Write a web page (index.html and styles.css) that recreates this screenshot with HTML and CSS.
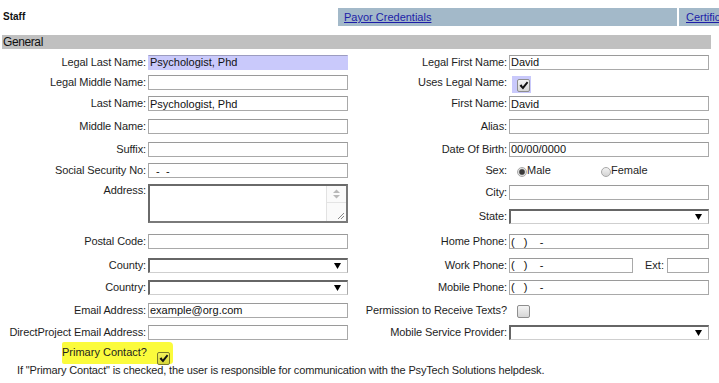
FILE: index.html
```html
<!DOCTYPE html>
<html>
<head>
<meta charset="utf-8">
<link rel="stylesheet" href="styles.css">
</head>
<body>
<div class="topbar">
  <div class="title">Staff</div>
  <div class="tab tab-main"><a href="#">Payor Credentials</a></div>
  <div class="tab tab-next"><a href="#">Certifications</a></div>
</div>
<div class="section">General</div>
<div class="form">
  <label class="lbl c1 r1">Legal Last Name:</label>
  <div class="fld c2 r1"><input class="txt hl" value="Psychologist, Phd"></div>
  <label class="lbl c3 r1">Legal First Name:</label>
  <div class="fld c4 r1"><input class="txt" value="David"></div>

  <label class="lbl c1 r2">Legal Middle Name:</label>
  <div class="fld c2 r2"><input class="txt" value=""></div>
  <label class="lbl c3 r2">Uses Legal Name:</label>
  <div class="fld c4 r2"><span class="cbhl"><input type="checkbox" class="cb" checked></span></div>

  <label class="lbl c1 r3">Last Name:</label>
  <div class="fld c2 r3"><input class="txt" value="Psychologist, Phd"></div>
  <label class="lbl c3 r3">First Name:</label>
  <div class="fld c4 r3"><input class="txt" value="David"></div>

  <label class="lbl c1 r4">Middle Name:</label>
  <div class="fld c2 r4"><input class="txt" value=""></div>
  <label class="lbl c3 r4">Alias:</label>
  <div class="fld c4 r4"><input class="txt" value=""></div>

  <label class="lbl c1 r5">Suffix:</label>
  <div class="fld c2 r5"><input class="txt" value=""></div>
  <label class="lbl c3 r5">Date Of Birth:</label>
  <div class="fld c4 r5"><input class="txt" value="00/00/0000"></div>

  <label class="lbl c1 r6">Social Security No:</label>
  <div class="fld c2 r6"><input class="txt" value="  -  -"></div>
  <label class="lbl c3 r6">Sex:</label>
  <div class="fld c4 r6 sex">
    <span class="opt opt-male"><input type="radio" name="sex" class="rd" checked>Male</span>
    <span class="opt"><input type="radio" name="sex" class="rd">Female</span>
  </div>

  <label class="lbl c1 r7 top">Address:</label>
  <div class="fld c2 addr">
    <div class="ta">
      <textarea></textarea>
      <div class="sb">
        <div class="sb-arrows">
          <svg width="9" height="12" viewBox="0 0 9 12"><path d="M1 5 L4.5 1.5 L8 5 Z" fill="#b8b8b8"/><path d="M1 7 L4.5 10.5 L8 7 Z" fill="#b8b8b8"/></svg>
        </div>
        <div class="sb-grip">
          <svg width="8" height="8" viewBox="0 0 8 8"><path d="M7 1 L1 7 M7 4 L4 7" stroke="#888" stroke-width="1"/></svg>
        </div>
      </div>
    </div>
  </div>
  <label class="lbl c3 r7">City:</label>
  <div class="fld c4 r7"><input class="txt" value=""></div>
  <label class="lbl c3 r8">State:</label>
  <div class="fld c4 r8"><select class="sel"><option></option></select></div>

  <label class="lbl c1 r9">Postal Code:</label>
  <div class="fld c2 r9"><input class="txt" value=""></div>
  <label class="lbl c3 r9">Home Phone:</label>
  <div class="fld c4 r9"><input class="txt" value="(   )    -"></div>

  <label class="lbl c1 r10">County:</label>
  <div class="fld c2 r10"><select class="sel"><option></option></select></div>
  <label class="lbl c3 r10">Work Phone:</label>
  <div class="fld c4 r10 work"><input class="txt phone" value="(   )    -"><span class="ext">Ext:</span><input class="txt extin" value=""></div>

  <label class="lbl c1 r11">Country:</label>
  <div class="fld c2 r11"><select class="sel"><option></option></select></div>
  <label class="lbl c3 r11">Mobile Phone:</label>
  <div class="fld c4 r11"><input class="txt" value="(   )    -"></div>

  <label class="lbl c1 r12">Email Address:</label>
  <div class="fld c2 r12"><input class="txt" value="example@org.com"></div>
  <label class="lbl c3 r12">Permission to Receive Texts?</label>
  <div class="fld c4 r12"><input type="checkbox" class="cb cb-solo"></div>

  <label class="lbl c1 r13">DirectProject Email Address:</label>
  <div class="fld c2 r13"><input class="txt" value=""></div>
  <label class="lbl c3 r13">Mobile Service Provider:</label>
  <div class="fld c4 r13"><select class="sel"><option></option></select></div>

  <div class="primary r14">
    <span class="marker"><span class="plabel">Primary Contact?</span><input type="checkbox" class="cb cb-yellow" checked></span>
  </div>
</div>
<p class="note">If "Primary Contact" is checked, the user is responsible for communication with the PsyTech Solutions helpdesk.</p>
</body>
</html>
```

FILE: styles.css
```css
html, body {
  margin: 0;
  padding: 0;
  background: #ffffff;
}
body {
  width: 719px;
  height: 383px;
  overflow: hidden;
  font-family: "Liberation Sans", Arial, sans-serif;
  font-size: 11px;
  color: #1e1e1e;
}
.topbar {
  display: flex;
  align-items: center;
  padding-top: 8px;
  height: 18px;
  margin-bottom: 9px;
}
.title {
  width: 335px;
  padding-left: 3px;
  font-weight: bold;
  font-size: 10px;
  color: #111;
  margin-top: -2px;
}
.tab {
  height: 18px;
  background: #a3b9c9;
  display: flex;
  align-items: center;
  white-space: nowrap;
  overflow: hidden;
}
.tab a {
  color: #1d1da8;
  text-decoration: underline;
  font-size: 11px;
}
.tab-main {
  width: 333px;
  padding-left: 6px;
  margin-right: 2px;
}
.tab-next {
  flex: 1;
  padding-left: 7px;
}
.section {
  margin-left: 2px;
  width: 709px;
  height: 14px;
  line-height: 14px;
  background: #c0c0c0;
  font-size: 12px;
  letter-spacing: -0.4px;
  padding-left: 1px;
  box-sizing: border-box;
  color: #111;
}
.form {
  margin-top: 3px;
  display: grid;
  grid-template-columns: 146px 200px 157px 200px;
  column-gap: 2px;
  grid-template-rows: 20px 21px 21px 24px 22px 21px 22px 26px 25px 22px 22px 24px 20px 22px;
}
.c1 { grid-column: 1; }
.c2 { grid-column: 2; }
.c3 { grid-column: 3; }
.c4 { grid-column: 4; }
.r1 { grid-row: 1; }
.r2 { grid-row: 2; }
.r3 { grid-row: 3; }
.r4 { grid-row: 4; }
.r5 { grid-row: 5; }
.r6 { grid-row: 6; }
.r7 { grid-row: 7; }
.r8 { grid-row: 8; }
.r9 { grid-row: 9; }
.r10 { grid-row: 10; }
.r11 { grid-row: 11; }
.r12 { grid-row: 12; }
.r13 { grid-row: 13; }
.r14 { grid-row: 14; }
.lbl {
  text-align: right;
  align-self: center;
  white-space: nowrap;
  line-height: 13px;
  letter-spacing: -0.1px;
}
.lbl.top {
  align-self: start;
  margin-top: 3px;
}
.fld {
  display: flex;
  align-items: center;
}
.txt {
  box-sizing: border-box;
  width: 200px;
  height: 15px;
  margin: 0;
  padding: 0 1px;
  border: 1px solid #a9a9a9;
  border-top-color: #9a9a9a;
  font-family: "Liberation Sans", Arial, sans-serif;
  font-size: 11px;
  color: #111;
  background: #fff;
  white-space: pre;
  outline: none;
}
.txt.hl {
  background: #c9c9fb;
  border-color: #c9c9fb;
  border-top-color: #9c9cc0;
}
.sel {
  -webkit-appearance: none;
  appearance: none;
  box-sizing: border-box;
  width: 200px;
  height: 15px;
  margin: 0;
  padding: 0;
  border-top: 2px solid #666;
  border-left: 2px solid #666;
  border-right: 1px solid #aaa;
  border-bottom: 1px solid #cfcfcf;
  border-radius: 0;
  background: #fff url("data:image/svg+xml,%3Csvg xmlns='http://www.w3.org/2000/svg' width='7' height='6'%3E%3Cpath d='M0 0 L7 0 L3.5 6 Z' fill='%23000'/%3E%3C/svg%3E") no-repeat right 6px center;
  font-family: "Liberation Sans", Arial, sans-serif;
  font-size: 11px;
}
.addr {
  grid-row: 7 / span 2;
  align-items: flex-start;
}
.ta {
  margin-top: 3px;
  box-sizing: border-box;
  width: 200px;
  height: 39px;
  border: 2px solid #6a6a6a;
  border-right-color: #7a7a7a;
  border-bottom-color: #7a7a7a;
  display: flex;
  background: #fff;
}
.ta textarea {
  flex: 1;
  border: none;
  resize: none;
  outline: none;
  margin: 0;
  padding: 0;
  overflow: hidden;
}
.sb {
  width: 19px;
  border-left: 1px solid #e2e2e2;
  display: flex;
  flex-direction: column;
  background: #fafafa;
}
.sb-arrows {
  height: 16px;
  border-bottom: 1px solid #e4e4e4;
  display: flex;
  align-items: center;
  justify-content: center;
}
.sb-grip {
  flex: 1;
  display: flex;
  align-items: flex-end;
  justify-content: flex-end;
  padding: 0 1px 1px 0;
}
.sb-grip svg {
  display: block;
}
.cb {
  -webkit-appearance: none;
  appearance: none;
  box-sizing: border-box;
  width: 13px;
  height: 13px;
  margin: 0;
  border: 1px solid #8e8e8e;
  border-radius: 2px;
  background: linear-gradient(#f4f4f4, #d6d6d6);
}
.cb:checked {
  background: url("data:image/svg+xml,%3Csvg xmlns='http://www.w3.org/2000/svg' width='11' height='11'%3E%3Cpath d='M1.5 5.8 L3.4 4.3 L4.8 6.4 L8.9 1.4 L10.3 2.7 L5 9.6 Z' fill='%23111'/%3E%3C/svg%3E") no-repeat center, linear-gradient(#f4f4f4, #d6d6d6);
}
.cbhl {
  margin-left: 3px;
  margin-top: 4px;
  box-sizing: border-box;
  width: 19px;
  height: 17px;
  background: #c9c9fb;
  padding: 3px 0 0 5px;
  align-self: flex-start;
}
.cb-solo {
  margin-left: 8px;
  margin-top: 3px;
}
.cb-yellow {
  margin-left: 11px;
  margin-top: 6px;
  border-color: #7a7a2a;
}
.cb-yellow:checked {
  background: url("data:image/svg+xml,%3Csvg xmlns='http://www.w3.org/2000/svg' width='11' height='11'%3E%3Cpath d='M1.5 5.8 L3.4 4.3 L4.8 6.4 L8.9 1.4 L10.3 2.7 L5 9.6 Z' fill='%23111'/%3E%3C/svg%3E") no-repeat center, linear-gradient(#f3f35a, #d6d63a);
}
.sex {
  padding-left: 8px;
}
.opt {
  display: inline-flex;
  align-items: center;
  line-height: 13px;
}
.opt-male {
  width: 84px;
}
.rd {
  -webkit-appearance: none;
  appearance: none;
  box-sizing: border-box;
  width: 10px;
  height: 10px;
  margin: 3px 0 0 0;
  border: 1px solid #a8a8a8;
  border-radius: 50%;
  background: linear-gradient(#f2f2f2, #d4d4d4);
}
.rd:checked {
  background: radial-gradient(circle, #3a3a3a 0, #3a3a3a 2.2px, #9a9a9a 3px, #e6e6e6 3.6px);
}
.work .phone {
  width: 124px;
}
.ext {
  margin-left: 12px;
  width: 25px;
}
.work .extin {
  width: 42px;
}
.primary {
  grid-column: 1 / span 2;
  display: flex;
  align-items: stretch;
}
.marker {
  margin-left: 62px;
  width: 111px;
  display: flex;
  align-items: flex-start;
  background: #fbfb3c;
  border-radius: 2px 4px 3px 2px;
  padding-top: 4px;
  box-sizing: border-box;
}
.plabel {
  width: 84px;
  text-align: right;
  line-height: 13px;
  white-space: nowrap;
}
.note {
  margin: 0;
  padding-left: 17px;
  line-height: 13px;
  white-space: nowrap;
  letter-spacing: -0.15px;
}
```
